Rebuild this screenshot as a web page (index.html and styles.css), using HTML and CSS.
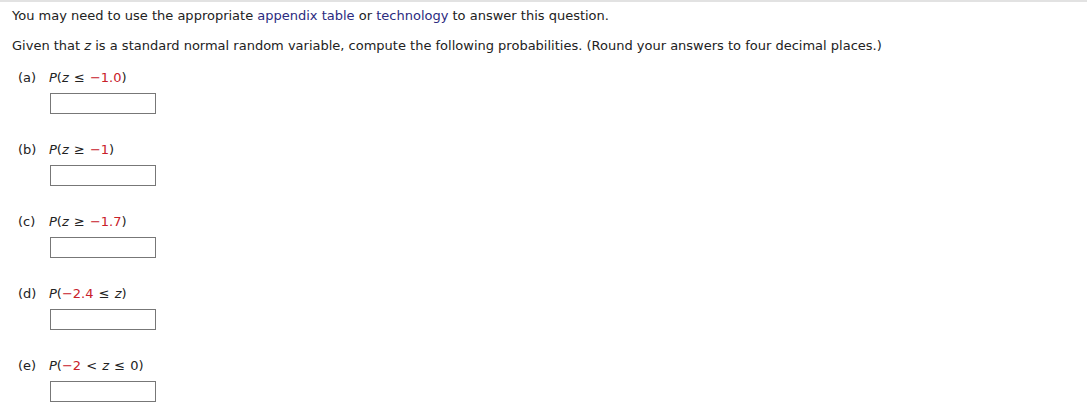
FILE: index.html
```html
<!DOCTYPE html>
<html>
<head>
<meta charset="utf-8">
<link rel="stylesheet" href="styles.css">
</head>
<body>
<div class="page">
  <p class="intro">You may need to use the appropriate <span class="link">appendix table</span> or <span class="link">technology</span> to answer this question.</p>
  <p class="question">Given that <i>z</i> is a standard normal random variable, compute the following probabilities. (Round your answers to four decimal places.)</p>
  <div class="parts">
    <div class="part">
      <div class="prompt"><span class="label">(a)</span><span class="expr"><i>P</i>(<i>z</i> ≤ <span class="num">−1.0</span>)</span></div>
      <div class="answer"><span class="box"></span></div>
    </div>
    <div class="part">
      <div class="prompt"><span class="label">(b)</span><span class="expr"><i>P</i>(<i>z</i> ≥ <span class="num">−1</span>)</span></div>
      <div class="answer"><span class="box"></span></div>
    </div>
    <div class="part">
      <div class="prompt"><span class="label">(c)</span><span class="expr"><i>P</i>(<i>z</i> ≥ <span class="num">−1.7</span>)</span></div>
      <div class="answer"><span class="box"></span></div>
    </div>
    <div class="part">
      <div class="prompt"><span class="label">(d)</span><span class="expr"><i>P</i>(<span class="num">−2.4</span> ≤ <i>z</i>)</span></div>
      <div class="answer"><span class="box"></span></div>
    </div>
    <div class="part">
      <div class="prompt"><span class="label">(e)</span><span class="expr"><i>P</i>(<span class="num">−2</span> &lt; <i>z</i> ≤ 0)</span></div>
      <div class="answer"><span class="box"></span></div>
    </div>
  </div>
</div>
</body>
</html>
```
FILE: styles.css
```css
html, body {
  margin: 0;
  padding: 0;
  background: #fff;
}
body {
  font-family: "DejaVu Sans", Verdana, sans-serif;
  font-size: 13px;
  color: #222;
}
.page {
  border-top: 2px solid #e2e2e2;
  padding: 6px 12px 0 12px;
}
.intro {
  margin: 0;
  line-height: 16px;
}
.question {
  margin: 14px 0 0 0;
  line-height: 16px;
}
.link {
  color: #2b2b80;
}
.parts {
  display: flex;
  flex-direction: column;
  gap: 28px;
  margin-top: 16px;
}
.part {
  display: flex;
  flex-direction: column;
}
.prompt {
  display: flex;
  line-height: 16px;
  padding-left: 6px;
}
.label {
  width: 31px;
}
.expr i {
  font-style: italic;
}
.expr {
  word-spacing: 1px;
}
.num {
  color: #c8202a;
}
.answer {
  padding-left: 38px;
  margin-top: 7px;
}
.box {
  display: block;
  width: 104px;
  height: 19px;
  border: 1px solid #777;
  background: #fff;
}
```
